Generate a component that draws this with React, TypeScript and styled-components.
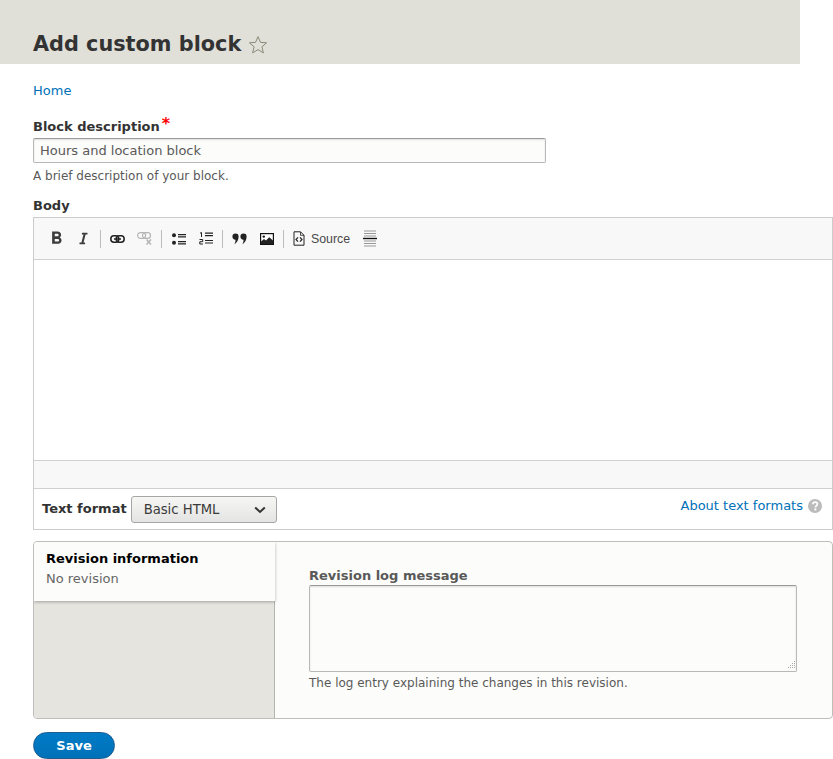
import React from "react";
import styled, { createGlobalStyle } from "styled-components";
import { FaItalic } from "react-icons/fa";
import { MdFormatBold } from "react-icons/md";

const GlobalStyle = createGlobalStyle`
	html,
	body {
		margin: 0;
		padding: 0;
		background: #fff;
		overflow: hidden;
	}
	body {
		width: 833px;
		height: 759px;
		font-family: "DejaVu Sans", sans-serif;
		font-size: 13px;
		line-height: 18px;
		color: #333;
	}
`;

const LinkIcon = () => (
	<svg width="15" height="8" viewBox="0 0 15 8" fill="none" stroke="#222" strokeWidth="1.5">
		<rect x="0.8" y="0.8" width="8" height="6.4" rx="3.2" />
		<rect x="6.2" y="0.8" width="8" height="6.4" rx="3.2" />
		<path d="M4 4h7" />
	</svg>
);

const UnlinkIcon = () => (
	<svg width="15" height="13" viewBox="0 0 15 13" fill="none" stroke="#b4b4b4" strokeWidth="1.2">
		<rect x="0.6" y="0.6" width="8" height="5.8" rx="2.9" />
		<rect x="5.5" y="0.6" width="8" height="5.8" rx="2.9" />
		<path d="M9.5 7.5l4.5 5M14 7.5l-4.5 5" strokeWidth="1.5" />
	</svg>
);

const BulletIcon = () => (
	<svg width="14" height="12" viewBox="0 0 14 12" fill="#222">
		<circle cx="2" cy="2.2" r="2" />
		<circle cx="2" cy="9.8" r="2" />
		<path d="M6 1h8v1.2H6zM6 3.2h8v1.2H6zM6 8h8v1.2H6zM6 10.2h8v1.2H6z" />
	</svg>
);

const NumberIcon = () => (
	<svg width="14" height="13" viewBox="0 0 14 13" fill="none" stroke="#222" strokeWidth="1">
		<path d="M1 1.2l1.5-.7v4.5" />
		<path d="M.5 7.5h3.2v2.2H.8V12h3.2" />
		<path d="M6 1.2h8M6 3.7h8M6 8.5h8M6 11h8" strokeWidth="1.2" />
	</svg>
);

const QuoteIcon = () => (
	<svg width="15" height="12" viewBox="0 0 15 12" fill="#222">
		<path d="M3.5 .5a3.1 3.1 0 0 1 3.1 3.2c0 3.1-1.8 6.2-4.4 7.8.9-1.6 1.4-2.9 1.3-4.8A3.1 3.1 0 0 1 3.5.5z" />
		<path d="M11.5 .5a3.1 3.1 0 0 1 3.1 3.2c0 3.1-1.8 6.2-4.4 7.8.9-1.6 1.4-2.9 1.3-4.8a3.1 3.1 0 0 1 0-6.2z" />
	</svg>
);

const ImageIcon = () => (
	<svg width="14" height="12" viewBox="0 0 14 12">
		<rect x="0.6" y="0.6" width="12.8" height="10.8" fill="#fff" stroke="#111" strokeWidth="1.2" />
		<circle cx="3.8" cy="3.6" r="1.2" fill="#111" />
		<path d="M1 11V8.5l3-2.4 2 1.4 3.2-3.2L13 7.5V11z" fill="#222" />
	</svg>
);

const SourceIcon = () => (
	<svg width="12" height="15" viewBox="0 0 12 15" fill="none" stroke="#222">
		<path d="M1 0.8h6.5l3.5 3.5v9.9H1z" strokeWidth="1" />
		<path d="M7.5 1v3.3H11" strokeWidth="0.8" />
		<path d="M5 6.3L3 8.5l2 2.2M7 6.3l2 2.2-2 2.2" strokeWidth="1.2" />
	</svg>
);

const RuleIcon = () => (
	<svg width="14" height="17" viewBox="0 0 14 17" fill="none">
		<path d="M1 1h12M1 3.5h12M1 6h12M1 11h12M1 13.5h12M1 16h12" stroke="#999" strokeWidth="1" />
		<path d="M0 8.5h14" stroke="#111" strokeWidth="1.4" />
	</svg>
);

const HelpIcon = () => (
	<svg width="14" height="14" viewBox="0 0 14 14">
		<circle cx="7" cy="7" r="7" fill="#bbb" />
		<path d="M4.7 5.3C4.8 3.9 5.8 3.1 7.1 3.1c1.4 0 2.3.8 2.3 2 0 1.8-2 1.8-2 3.4" fill="none" stroke="#fff" strokeWidth="1.7" />
		<rect x="6.3" y="9.5" width="2" height="1.9" fill="#fff" />
	</svg>
);

const StarIcon = () => (
	<svg width="20" height="20" viewBox="0 0 20 20">
		<path d="M10 1.6l2.4 5.7 6.2.5-4.7 4 1.5 6.1L10 14.6l-5.4 3.3 1.5-6.1-4.7-4 6.2-.5z" fill="none" stroke="#8a8a78" strokeWidth="1" />
	</svg>
);

export default function App() {
	return (
		<>
			<GlobalStyle />
			<Page>
				<Header>
					<Title>Add custom block</Title>
					<StarSlot>
						<StarIcon />
					</StarSlot>
				</Header>
				<Main>
					<Breadcrumb href="#">Home</Breadcrumb>

					<DescriptionField>
						<FieldLabel>
							Block description<Required>*</Required>
						</FieldLabel>
						<TextInput defaultValue="Hours and location block" readOnly />
						<HelpText>A brief description of your block.</HelpText>
					</DescriptionField>

					<FieldLabel>Body</FieldLabel>
					<Editor>
						<Toolbar>
							<ToolButton><MdFormatBold size={21} color="#3c3c3c" /></ToolButton>
							<ToolButton><FaItalic size={13} color="#3c3c3c" /></ToolButton>
							<Separator />
							<ToolButton><LinkIcon /></ToolButton>
							<ToolButton><UnlinkIcon /></ToolButton>
							<Separator />
							<ToolButton><BulletIcon /></ToolButton>
							<ToolButton><NumberIcon /></ToolButton>
							<Separator />
							<ToolButton><QuoteIcon /></ToolButton>
							<ToolButton><ImageIcon /></ToolButton>
							<Separator />
							<SourceButton>
								<SourceIcon />
								Source
							</SourceButton>
							<RuleButton><RuleIcon /></RuleButton>
						</Toolbar>
						<EditArea />
						<PathBar />
						<FormatRow>
							<FormatLabel>Text format</FormatLabel>
							<FormatSelect>
								Basic HTML
								<svg width="12" height="8" viewBox="0 0 12 8" fill="none" stroke="#333" strokeWidth="2">
									<path d="M1.2 1.5L6 6l4.8-4.5" />
								</svg>
							</FormatSelect>
							<FormatHelp>
								<HelpLink href="#">About text formats</HelpLink>
								<HelpIcon />
							</FormatHelp>
						</FormatRow>
					</Editor>

					<Panel>
						<PanelMenu>
							<MenuItem>
								<MenuTitle>Revision information</MenuTitle>
								<MenuSummary>No revision</MenuSummary>
							</MenuItem>
						</PanelMenu>
						<PanelBody>
							<PanelLabel>Revision log message</PanelLabel>
							<LogArea>
								<svg width="10" height="10" viewBox="0 0 10 10" fill="#aaa">
									<path d="M8 0h1v1H8zM6 2h1v1H6zM8 2h1v1H8zM4 4h1v1H4zM6 4h1v1H6zM8 4h1v1H8zM2 6h1v1H2zM4 6h1v1H4zM6 6h1v1H6zM8 6h1v1H8z" />
								</svg>
							</LogArea>
							<HelpText $gap={2}>The log entry explaining the changes in this revision.</HelpText>
						</PanelBody>
					</Panel>

					<SaveButton>Save</SaveButton>
				</Main>
			</Page>
		</>
	);
}

const Page = styled.div`
	width: 833px;
	height: 759px;
	overflow: hidden;
`;

const Header = styled.header`
	display: flex;
	align-items: flex-end;
	width: 800px;
	height: 64px;
	box-sizing: border-box;
	padding: 0 0 6px 33px;
	background: #e0e0d8;
`;

const Title = styled.h1`
	margin: 0;
	font-size: 20.8px;
	line-height: 28px;
	font-weight: 700;
	color: #333;
`;

const StarSlot = styled.span`
	display: flex;
	margin: 0 0 3px 7px;
`;

const Main = styled.main`
	padding: 18px 0 0 33px;
	display: flex;
	flex-direction: column;
	align-items: flex-start;
`;

const Breadcrumb = styled.a`
	color: #0071b8;
	text-decoration: none;
	line-height: 18px;
`;

const DescriptionField = styled.div`
	margin: 17px 0 11px;
`;

const FieldLabel = styled.label`
	display: block;
	height: 19px;
	margin-bottom: 2px;
	font-weight: 700;
	line-height: 19px;
	color: #333;
`;

const Required = styled.span`
	color: #f00;
	font-size: 16px;
	line-height: 0;
	margin-left: 2px;
	vertical-align: 2px;
`;

const TextInput = styled.input`
	display: block;
	width: 513px;
	height: 25px;
	box-sizing: border-box;
	padding: 0 6px;
	border: 1px solid #b8b8b8;
	border-top-color: #999;
	border-radius: 2px;
	background: #fcfcfa;
	box-shadow: inset 0 1px 2px rgba(0, 0, 0, 0.12);
	font: 13px "DejaVu Sans", sans-serif;
	color: #595959;
`;

const HelpText = styled.div<{ $gap?: number }>`
	margin-top: ${(p) => p.$gap ?? 4}px;
	font-size: 12px;
	line-height: 18px;
	color: #595959;
`;

const Editor = styled.div`
	width: 800px;
	box-sizing: border-box;
	border: 1px solid #ccc;
`;

const Toolbar = styled.div`
	display: flex;
	align-items: center;
	height: 41px;
	padding-left: 9px;
	background: #f8f8f8;
	border-bottom: 1px solid #d1d1d1;
`;

const ToolButton = styled.span`
	display: flex;
	align-items: center;
	justify-content: center;
	width: 27px;
	height: 26px;
`;

const RuleButton = styled(ToolButton)`
	margin-left: 1px;
`;

const SourceButton = styled.span`
	display: flex;
	align-items: center;
	gap: 6px;
	padding: 0 5px 0 6px;
	font-family: "Liberation Sans", Arial, sans-serif;
	font-size: 12.35px;
	color: #484848;
`;

const Separator = styled.span`
	width: 1px;
	height: 18px;
	margin: 0 3px;
	background: #bcbcbc;
`;

const EditArea = styled.div`
	height: 200px;
	background: #fff;
`;

const PathBar = styled.div`
	height: 27px;
	background: #f8f8f8;
	border-top: 1px solid #d1d1d1;
	border-bottom: 1px solid #d1d1d1;
`;

const FormatRow = styled.div`
	display: flex;
	align-items: flex-start;
	height: 40px;
	padding: 7px 0 0 8px;
	box-sizing: border-box;
`;

const FormatLabel = styled.span`
	margin-top: 4px;
	font-weight: 700;
	color: #333;
`;

const FormatSelect = styled.div`
	display: flex;
	align-items: center;
	justify-content: space-between;
	width: 146px;
	height: 27px;
	box-sizing: border-box;
	margin-left: 4px;
	padding: 0 10px 0 12px;
	border: 1px solid #a6a6a6;
	border-radius: 3px;
	background: linear-gradient(#f6f6f3, #e4e4e4);
	font-size: 13.2px;
	color: #3a3a3a;
`;

const FormatHelp = styled.div`
	display: flex;
	align-items: center;
	gap: 5px;
	margin: 1px 0 0 auto;
	padding-right: 10px;
`;

const HelpLink = styled.a`
	color: #0071b8;
	text-decoration: none;
`;

const Panel = styled.div`
	display: flex;
	width: 800px;
	height: 178px;
	box-sizing: border-box;
	margin-top: 11px;
	background: #fcfcfa;
	border: 1px solid #bfbfba;
	border-radius: 4px;
	overflow: hidden;
`;

const PanelMenu = styled.div`
	width: 240px;
	flex: none;
	background: #e6e4df;
	border-right: 1px solid #b4b4b0;
`;

const MenuItem = styled.div`
	height: 59px;
	box-sizing: border-box;
	margin-right: -1px;
	padding: 8px 12px;
	background: #fcfcfa;
	box-shadow: 0 1px 3px rgba(0, 0, 0, 0.3);
	position: relative;
`;

const MenuTitle = styled.div`
	font-weight: 700;
	color: #000;
`;

const MenuSummary = styled.div`
	margin-top: 2px;
	color: #666;
`;

const PanelBody = styled.div`
	flex: 1;
	padding: 24px 0 0 34px;
`;

const PanelLabel = styled.div`
	height: 19px;
	font-weight: 700;
	line-height: 19px;
	color: #595959;
`;

const LogArea = styled.div`
	display: flex;
	align-items: flex-end;
	justify-content: flex-end;
	width: 488px;
	height: 87px;
	box-sizing: border-box;
	border: 1px solid #b8b8b8;
	border-top-color: #999;
	border-radius: 2px;
	background: #fcfcfa;
	box-shadow: inset 0 1px 2px rgba(0, 0, 0, 0.12);
`;

const SaveButton = styled.button`
	width: 82px;
	height: 27px;
	margin-top: 13px;
	padding: 0;
	border: 1px solid #1e5c90;
	border-radius: 20px;
	background: linear-gradient(#007bc6, #0071b8);
	font: 700 13px "DejaVu Sans", sans-serif;
	color: #fff;
`;
